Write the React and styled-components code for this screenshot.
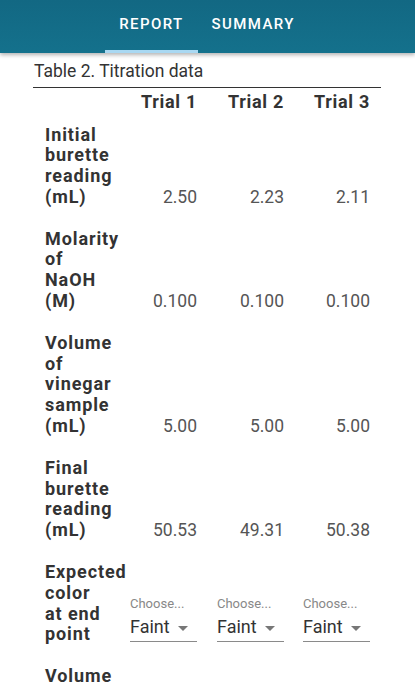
import React from 'react';
import styled, { createGlobalStyle } from 'styled-components';

const GlobalStyle = createGlobalStyle`
  html, body {
    margin: 0;
    padding: 0;
    background: #fff;
    font-family: Roboto, "Liberation Sans", sans-serif;
  }
`;

// label lines are broken the way the narrow column breaks them
const rows = [
  { label: ['Initial', 'burette', 'reading', '(mL)'], values: ['2.50', '2.23', '2.11'] },
  { label: ['Molarity', 'of', 'NaOH', '(M)'], values: ['0.100', '0.100', '0.100'] },
  { label: ['Volume', 'of', 'vinegar', 'sample', '(mL)'], values: ['5.00', '5.00', '5.00'] },
  { label: ['Final', 'burette', 'reading', '(mL)'], values: ['50.53', '49.31', '50.38'] },
  { label: ['Expected', 'color', 'at end', 'point'], select: true },
  { label: ['Volume'], values: ['', '', ''] },
];

const App = () => (
  <>
    <GlobalStyle />
    <Page>
      <TabBar>
        <Tab active>Report</Tab>
        <Tab>Summary</Tab>
      </TabBar>
      <Content>
        <Caption>Table 2. Titration data</Caption>
        <Table>
          <colgroup>
            <col style={{ width: 97 }} />
            <col style={{ width: 78 }} />
            <col style={{ width: 87 }} />
            <col style={{ width: 86 }} />
          </colgroup>
          <thead>
            <tr>
              <HeadCell />
              <HeadCell>Trial 1</HeadCell>
              <HeadCell>Trial 2</HeadCell>
              <HeadCell>Trial 3</HeadCell>
            </tr>
          </thead>
          <tbody>
            {rows.map((row) => (
              <tr key={row.label.join(' ')}>
                <LabelCell>
                  {row.label.map((line) => (
                    <LabelLine key={line}>{line}</LabelLine>
                  ))}
                </LabelCell>
                {row.select
                  ? [0, 1, 2].map((i) => (
                      <ValueCell key={i}>
                        <Select>
                          <SelectHint>Choose...</SelectHint>
                          <SelectValue>
                            Faint
                            <Caret />
                          </SelectValue>
                        </Select>
                      </ValueCell>
                    ))
                  : row.values.map((v, i) => <ValueCell key={i}>{v}</ValueCell>)}
              </tr>
            ))}
          </tbody>
        </Table>
      </Content>
    </Page>
  </>
);

export default App;

const Page = styled.div`
  width: 415px;
  height: 700px;
  overflow: hidden;
`;

const TabBar = styled.div`
  height: 53px;
  background: linear-gradient(#126883, #14718c);
  display: flex;
  justify-content: center;
  padding-right: 1px;
  box-shadow: 0 2px 4px rgba(0, 0, 0, 0.3);
  position: relative;
  z-index: 1;
`;

const Tab = styled.div`
  display: flex;
  align-items: center;
  justify-content: center;
  padding: 0 14px 2px;
  height: 48px;
  color: #fff;
  font-size: 15px;
  font-weight: 500;
  letter-spacing: 1.4px;
  text-transform: uppercase;
  border-bottom: 3px solid ${(p) => (p.active ? '#a9d8f2' : 'transparent')};
`;

const Content = styled.div`
  padding: 8px 34px 0 33px;
`;

const Caption = styled.div`
  font-size: 17.5px;
  color: #333;
  line-height: 21px;
  padding-left: 1px;
  padding-bottom: 5px;
  border-bottom: 1px solid #333;
`;

const Table = styled.table`
  width: 348px;
  table-layout: fixed;
  border-collapse: collapse;
`;

const HeadCell = styled.th`
  padding: 3px 11px 2px 0;
  text-align: right;
  font-size: 18px;
  font-weight: 700;
  letter-spacing: 0.7px;
  color: #333;
  line-height: 21px;
`;

const LabelCell = styled.td`
  padding: 10.5px 0 10.5px 12px;
  font-size: 18px;
  font-weight: 700;
  letter-spacing: 0.9px;
  color: #333;
  line-height: 20.8px;
  vertical-align: bottom;
  text-align: left;
  white-space: nowrap;
`;

const LabelLine = styled.div``;

const ValueCell = styled.td`
  padding: 10.5px 11px 10.5px 0;
  font-size: 17.5px;
  color: #555;
  line-height: 20.8px;
  text-align: right;
  vertical-align: bottom;
`;

const Select = styled.div`
  display: inline-block;
  vertical-align: bottom;
  width: 67px;
  text-align: left;
  border-bottom: 1px solid #8a8a8a;
  margin-bottom: 3px;
`;

const SelectHint = styled.div`
  font-size: 13px;
  line-height: 16px;
  color: #888;
`;

const SelectValue = styled.div`
  display: flex;
  align-items: center;
  font-size: 18px;
  color: #333;
  line-height: 20px;
  padding: 5px 0 4px;
`;

const Caret = styled.span`
  width: 0;
  height: 0;
  margin-left: 8px;
  margin-top: 2px;
  border-left: 5px solid transparent;
  border-right: 5px solid transparent;
  border-top: 5px solid #777;
`;
